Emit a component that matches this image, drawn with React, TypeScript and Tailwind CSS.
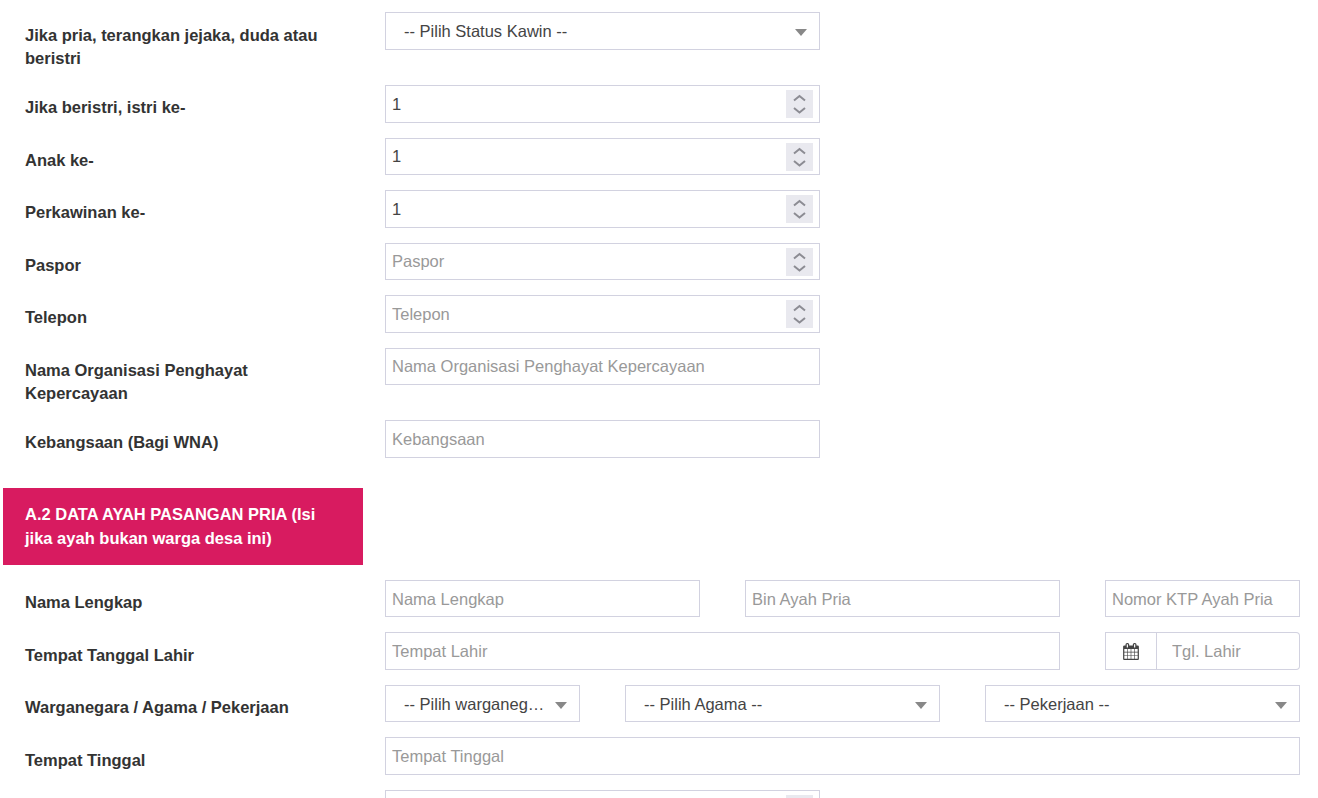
const fieldClass =
  "block w-full h-[37.5px] border border-[#d2d2e0] bg-white px-[6px] pt-[1px] text-[16.5px] text-[#444] placeholder:text-[#999] outline-none";

const numberClass =
  fieldClass + " [appearance:textfield] [&::-webkit-inner-spin-button]:appearance-none [&::-webkit-outer-spin-button]:appearance-none";

function Label({ text }: { text: string }) {
  return (
    <label className="block w-[360px] shrink-0 px-[22.5px] pt-[11.3px] text-[16.5px] leading-[1.4] font-bold text-[#333]">
      {text}
    </label>
  );
}

function Select({ text }: { text: string }) {
  return (
    <div className="flex h-[37.5px] items-center border border-[#d2d2e0] bg-white pt-[1px] pr-[12px] pl-[18px] text-[16.5px] text-[#444]">
      <span className="min-w-0 flex-1 truncate">{text}</span>
      <span className="mt-[3px] ml-[8px] h-0 w-0 shrink-0 border-x-[6px] border-t-[7px] border-x-transparent border-t-[#888]"></span>
    </div>
  );
}

function NumberField({ value, placeholder }: { value?: string; placeholder?: string }) {
  return (
    <div className="relative">
      <input type="number" defaultValue={value} placeholder={placeholder} className={numberClass} />
      <span className="absolute top-[5px] right-[7px] h-[28px] w-[27px] bg-[#e9e9ef]">
        <svg viewBox="0 0 27 28" className="h-full w-full fill-none stroke-[#8c8c93] stroke-2">
          <path d="M8 10.5l5.5-4.5 5.5 4.5" />
          <path d="M8 18l5.5 4.5 5.5-4.5" />
        </svg>
      </span>
    </div>
  );
}

function NumberRow({ label, value, placeholder }: { label: string; value?: string; placeholder?: string }) {
  return (
    <div className="mb-[15px] flex">
      <Label text={label} />
      <div className="w-[480px] shrink-0 px-[22.5px]">
        <NumberField value={value} placeholder={placeholder} />
      </div>
    </div>
  );
}

function CalendarIcon() {
  return (
    <svg viewBox="0 0 1664 1792" className="h-[17px] w-[16px] fill-[#444]">
      <path d="M128 1664h288v-288h-288v288zm352 0h320v-288h-320v288zm-352-352h288v-320h-288v320zm352 0h320v-320h-320v320zm-352-384h288v-288h-288v288zm736 736h320v-288h-320v288zm-384-736h320v-288h-320v288zm768 736h288v-288h-288v288zm-384-352h320v-320h-320v320zm-352-864v-288q0-13-9.5-22.5t-22.5-9.5h-64q-13 0-22.5 9.5t-9.5 22.5v288q0 13 9.5 22.5t22.5 9.5h64q13 0 22.5-9.5t9.5-22.5zm736 864h288v-320h-288v320zm-384-384h320v-288h-320v288zm384 0h288v-288h-288v288zm32-480v-288q0-13-9.5-22.5t-22.5-9.5h-64q-13 0-22.5 9.5t-9.5 22.5v288q0 13 9.5 22.5t22.5 9.5h64q13 0 22.5-9.5t9.5-22.5zm384-64v1280q0 52-38 90t-90 38h-1408q-52 0-90-38t-38-90v-1280q0-52 38-90t90-38h128v-96q0-66 47-113t113-47h64q66 0 113 47t47 113v96h384v-96q0-66 47-113t113-47h64q66 0 113 47t47 113v96h128q52 0 90 38t38 90z" />
    </svg>
  );
}

export default function App() {
  return (
    <div className="h-[798px] overflow-hidden bg-white pt-[12px] pl-[2.5px] font-['Liberation_Sans',Arial,sans-serif]">
      <div className="mb-[15.15px] flex">
        <div className="pt-[0.4px]">
          <Label text="Jika pria, terangkan jejaka, duda atau beristri" />
        </div>
        <div className="w-[480px] shrink-0 px-[22.5px]">
          <Select text="-- Pilih Status Kawin --" />
        </div>
      </div>

      <NumberRow label="Jika beristri, istri ke-" value="1" />
      <NumberRow label="Anak ke-" value="1" />
      <NumberRow label="Perkawinan ke-" value="1" />
      <NumberRow label="Paspor" placeholder="Paspor" />
      <NumberRow label="Telepon" placeholder="Telepon" />

      <div className="mb-[15px] flex">
        <Label text="Nama Organisasi Penghayat Kepercayaan" />
        <div className="w-[480px] shrink-0 px-[22.5px]">
          <input type="text" placeholder="Nama Organisasi Penghayat Kepercayaan" className={fieldClass} />
        </div>
      </div>

      <div className="mb-[15px] flex">
        <Label text="Kebangsaan (Bagi WNA)" />
        <div className="w-[480px] shrink-0 px-[22.5px]">
          <input type="text" placeholder="Kebangsaan" className={fieldClass} />
        </div>
      </div>

      <div className="mt-[30.5px] mb-[14.85px] w-[360px] bg-[#d81b60] px-[22.5px] pt-[15.45px] pb-[15.35px] text-[16.5px] leading-[1.4] font-bold text-white">
        A.2 DATA AYAH PASANGAN PRIA (Isi jika ayah bukan warga desa ini)
      </div>

      <div className="mb-[15px] flex">
        <Label text="Nama Lengkap" />
        <div className="w-[360px] shrink-0 px-[22.5px]">
          <input type="text" placeholder="Nama Lengkap" className={fieldClass} />
        </div>
        <div className="w-[360px] shrink-0 px-[22.5px]">
          <input type="text" placeholder="Bin Ayah Pria" className={fieldClass} />
        </div>
        <div className="w-[240px] shrink-0 px-[22.5px]">
          <input type="text" placeholder="Nomor KTP Ayah Pria" className={fieldClass} />
        </div>
      </div>

      <div className="mb-[15px] flex">
        <Label text="Tempat Tanggal Lahir" />
        <div className="w-[720px] shrink-0 px-[22.5px]">
          <input type="text" placeholder="Tempat Lahir" className={fieldClass} />
        </div>
        <div className="w-[240px] shrink-0 px-[22.5px]">
          <div className="flex h-[37.5px]">
            <span className="flex w-[52px] shrink-0 items-center justify-center border border-[#d2d2e0] bg-white">
              <CalendarIcon />
            </span>
            <input
              type="text"
              placeholder="Tgl. Lahir"
              className="block h-full min-w-0 flex-1 rounded-r-[4px] border border-l-0 border-[#d2d2e0] bg-white px-[15px] pt-[1px] text-[16.5px] text-[#444] outline-none placeholder:text-[#999]"
            />
          </div>
        </div>
      </div>

      <div className="mb-[15px] flex">
        <Label text="Warganegara / Agama / Pekerjaan" />
        <div className="w-[240px] shrink-0 px-[22.5px]">
          <Select text="-- Pilih warganegara --" />
        </div>
        <div className="w-[360px] shrink-0 px-[22.5px]">
          <Select text="-- Pilih Agama --" />
        </div>
        <div className="w-[360px] shrink-0 px-[22.5px]">
          <Select text="-- Pekerjaan --" />
        </div>
      </div>

      <div className="mb-[15px] flex">
        <Label text="Tempat Tinggal" />
        <div className="w-[960px] shrink-0 px-[22.5px]">
          <input type="text" placeholder="Tempat Tinggal" className={fieldClass} />
        </div>
      </div>

      <div className="mb-[15px] flex">
        <Label text="" />
        <div className="w-[480px] shrink-0 px-[22.5px]">
          <NumberField />
        </div>
      </div>
    </div>
  );
}
